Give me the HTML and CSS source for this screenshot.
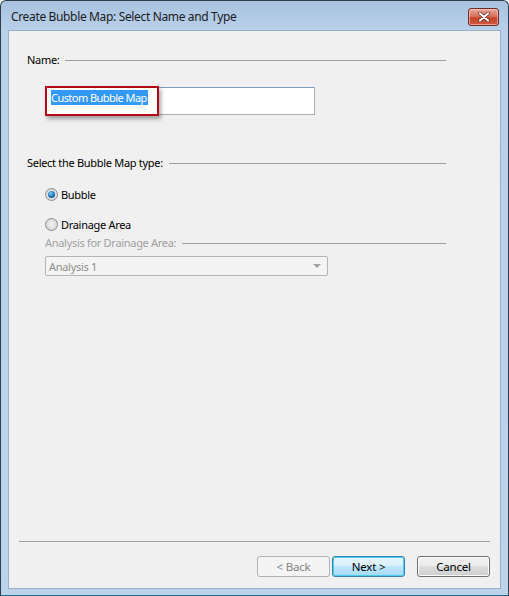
FILE: index.html
```html
<!DOCTYPE html>
<html>
<head>
<meta charset="utf-8">
<title>Create Bubble Map</title>
<link rel="stylesheet" href="styles.css">
</head>
<body>
<div class="window">
  <div class="titlebar">
    <span class="title">Create Bubble Map: Select Name and Type</span>
    <button class="close" aria-label="Close">
      <svg width="14" height="10" viewBox="0 0 14 10">
        <path d="M3 1.5 L11 8.5 M11 1.5 L3 8.5" stroke="#5a2a22" stroke-width="3.6" stroke-linecap="round"/>
        <path d="M3 1.5 L11 8.5 M11 1.5 L3 8.5" stroke="#ffffff" stroke-width="2.2" stroke-linecap="round"/>
      </svg>
    </button>
  </div>
  <div class="client">
    <div class="body">
      <div class="group-head"><span>Name:</span><i class="rule"></i></div>
      <div class="name-row">
        <div class="textbox"><span class="sel">Custom Bubble Map</span></div>
        <div class="callout"></div>
      </div>

      <div class="group-head type-head"><span>Select the Bubble Map type:</span><i class="rule"></i></div>
      <div class="options">
        <label class="radio"><span class="dot on"></span>Bubble</label>
        <label class="radio second"><span class="dot"></span>Drainage Area</label>
        <div class="group-head sub disabled"><span>Analysis for Drainage Area:</span><i class="rule"></i></div>
        <div class="combo"><span>Analysis 1</span><span class="arrow"></span></div>
      </div>
    </div>
    <div class="footer">
      <div class="sep"></div>
      <div class="buttons">
        <button class="btn disabled">&lt; Back</button>
        <button class="btn default">Next &gt;</button>
        <button class="btn cancel">Cancel</button>
      </div>
    </div>
  </div>
</div>
</body>
</html>
```
FILE: styles.css
```css
html, body {
  margin: 0;
  padding: 0;
  background: #ffffff;
}

body {
  font-family: "Noto Sans", "Open Sans", sans-serif;
  font-size: 11px;
  letter-spacing: -0.3px;
  color: #000;
}

.window {
  width: 509px;
  height: 596px;
  box-sizing: border-box;
  border: 1px solid #2e3c4c;
  border-bottom-color: #1f6b86;
  border-radius: 6px 6px 0 0;
  background: linear-gradient(180deg, #a8c2df 0%, #b9d0ea 30px, #bcd3ec 100%);
  display: flex;
  flex-direction: column;
  padding: 0 7px 6px 7px;
  overflow: hidden;
}

.titlebar {
  height: 29px;
  display: flex;
  align-items: center;
  justify-content: space-between;
  padding-left: 3px;
}

.title {
  font-size: 12px;
  letter-spacing: -0.35px;
  color: #1b1b1b;
  margin-top: 1px;
}

.close {
  width: 31px;
  height: 18px;
  margin-top: 2px;
  margin-right: 2px;
  border: 1px solid #6e2a24;
  border-radius: 3px;
  background: linear-gradient(180deg, #e8a79b 0%, #d8735f 45%, #c4442c 55%, #d05a3e 100%);
  box-shadow: inset 0 0 0 1px rgba(255, 220, 210, 0.55);
  display: flex;
  align-items: center;
  justify-content: center;
  padding: 0;
}

.client {
  flex: 1;
  background: #f0f0f0;
  border: 1px solid #9aafc6;
  display: flex;
  flex-direction: column;
}

.body {
  flex: 1;
  padding: 20px 54px 0 18px;
}

.group-head {
  display: flex;
  align-items: center;
  gap: 6px;
  height: 16px;
}

.group-head span {
  white-space: nowrap;
}

.rule {
  flex: 1;
  height: 0;
  border-top: 1px solid #a0a0a0;
  margin-top: 2px;
}

.name-row {
  position: relative;
  margin: 20px 0 0 18px;
  height: 30px;
}

.textbox {
  width: 268px;
  height: 26px;
  border: 1px solid #abadb3;
  border-top-color: #7e9cbd;
  background: #fff;
  box-sizing: content-box;
  padding: 0;
}

.sel {
  display: inline-block;
  margin: 2px 0 0 5px;
  background: #3399ff;
  color: #fff;
  line-height: 15px;
  letter-spacing: -0.55px;
  padding: 0 1px 0 0;
}

.callout {
  position: absolute;
  left: 0;
  top: -1px;
  width: 110px;
  height: 26px;
  border: 2px solid #b00b16;
  box-shadow: 2px 3px 4px rgba(0, 0, 0, 0.35);
}

.type-head {
  margin-top: 37px;
}

.options {
  padding-left: 18px;
  margin-top: 16px;
}

.radio {
  display: flex;
  align-items: center;
  gap: 3px;
  height: 16px;
}

.radio.second {
  margin-top: 14px;
}

.dot {
  width: 11px;
  height: 11px;
  border-radius: 50%;
  border: 1px solid #8e8f8f;
  background: radial-gradient(circle at 50% 50%, #f4f4f4 0%, #d8d8d8 70%, #c0c0c0 100%);
  box-sizing: content-box;
  position: relative;
}

.dot.on::after {
  content: "";
  position: absolute;
  left: 2px;
  top: 2px;
  width: 7px;
  height: 7px;
  border-radius: 50%;
  background: radial-gradient(circle at 40% 35%, #7fd0f6 0%, #1a76b8 55%, #0e3c6e 100%);
}

.group-head.sub {
  margin-top: 3px;
  height: 15px;
}

.disabled {
  color: #a0a0a0;
}

.combo {
  margin-top: 6px;
  width: 274px;
  height: 18px;
  border: 1px solid #b4b4b4;
  border-radius: 2px;
  background: #f4f4f4;
  display: flex;
  align-items: center;
  justify-content: space-between;
  color: #8d8d8d;
  padding: 0 4px 0 3px;
  box-sizing: content-box;
}

.arrow {
  width: 0;
  height: 0;
  border-left: 4px solid transparent;
  border-right: 4px solid transparent;
  border-top: 4px solid #a0a0a0;
  margin-right: 2px;
}

.footer {
  padding: 0 10px 11px 10px;
}

.sep {
  margin-top: 1px;
  border-top: 1px solid #a0a0a0;
}

.buttons {
  display: flex;
  justify-content: flex-end;
  margin-top: 14px;
  gap: 2px;
}

.btn {
  width: 73px;
  height: 21px;
  font-family: inherit;
  font-size: 11.5px;
  letter-spacing: -0.2px;
  border: 1px solid #707070;
  border-radius: 3px;
  background: linear-gradient(180deg, #f2f2f2 0%, #ebebeb 45%, #dddddd 50%, #cfcfcf 100%);
  box-shadow: inset 0 0 0 1px #fbfbfb;
  color: #000;
  padding: 0;
}

.btn.disabled {
  border-color: #adb2b5;
  background: #f4f4f4;
  box-shadow: none;
  color: #838383;
}

.btn.default {
  border-color: #3c7fb1;
  background: linear-gradient(180deg, #eaf6fd 0%, #d9f0fc 45%, #bee6fd 50%, #a7d9f5 100%);
  box-shadow: inset 0 0 0 1px #48d0f0;
}

.btn.cancel {
  margin-left: 10px;
}
```
